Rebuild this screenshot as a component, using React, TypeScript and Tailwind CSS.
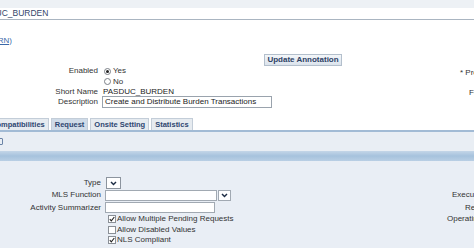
import React from 'react';

const Radio = ({ checked }: { checked?: boolean }) => (
    <span className="w-[7px] h-[7px] rounded-full border border-[#7a7f86] bg-white flex items-center justify-center shrink-0">
        {checked && <span className="w-[3px] h-[3px] rounded-full bg-[#222]" />}
    </span>
);

const Check = ({ checked }: { checked?: boolean }) => (
    <span className="w-[8px] h-[8px] border border-[#8a8f96] bg-white flex items-center justify-center shrink-0">
        {checked && (
            <svg width="6" height="6" viewBox="0 0 6 6">
                <path d="M0.8 3.2 L2.3 4.8 L5.3 1" fill="none" stroke="#222" strokeWidth="1.1" />
            </svg>
        )}
    </span>
);

const Chevron = () => (
    <svg width="7" height="5" viewBox="0 0 7 5">
        <path d="M1 1 L3.5 3.6 L6 1" fill="none" stroke="#1d2c44" strokeWidth="1.4" />
    </svg>
);

const TABS = ['Compatibilities', 'Request', 'Onsite Setting', 'Statistics'];

export default function App() {
    return (
        <div className="w-[474px] h-[248px] overflow-hidden bg-white text-[8px] leading-none text-[#333] font-['Liberation_Sans',Arial,sans-serif] flex flex-col">
            {/* page header */}
            <div className="h-[8px] bg-[#edf1f5] shrink-0" />
            <div className="h-[12px] border-b border-[#aab5c1] flex items-center whitespace-nowrap shrink-0">
                <span className="-ml-[27px] text-[8.5px] text-[#34466a]">PASDUC_BURDEN</span>
            </div>
            <div className="mt-[16px] h-[9px] w-[12px] overflow-hidden flex justify-end items-center whitespace-nowrap shrink-0">
                <span className="underline text-[#3b69a8]">(PASDUC_BURN)</span>
            </div>

            {/* main form */}
            <div className="mt-[8px] flex flex-col shrink-0">
                <div className="h-[13px] flex items-center">
                    <button className="ml-[264px] w-[78px] h-[12px] border border-[#b3bfcc] bg-gradient-to-b from-[#f3f6f9] to-[#dbe3ec] text-[8px] font-bold text-[#2d4165]">
                        Update Annotation
                    </button>
                </div>
                <div className="h-[10px] flex items-center whitespace-nowrap">
                    <span className="w-[98px] text-right">Enabled</span>
                    <span className="ml-[6px] flex items-center gap-[2px]"><Radio checked />Yes</span>
                    <span className="ml-auto w-[14px] mt-[4px]">* Program</span>
                </div>
                <div className="h-[11px] flex items-center whitespace-nowrap">
                    <span className="w-[98px]" />
                    <span className="ml-[6px] flex items-center gap-[2px]"><Radio />No</span>
                </div>
                <div className="h-[9px] flex items-center whitespace-nowrap">
                    <span className="w-[98px] text-right">Short Name</span>
                    <span className="ml-[5px] text-[#222]">PASDUC_BURDEN</span>
                    <span className="ml-auto w-[5px] mt-[2px]">Format</span>
                </div>
                <div className="h-[12px] flex items-center whitespace-nowrap">
                    <span className="w-[98px] text-right">Description</span>
                    <span className="ml-[4px] w-[170px] h-[12px] border border-[#9aa3ad] bg-white flex items-center pl-[2px] text-[#222]">
                        Create and Distribute Burden Transactions
                    </span>
                </div>
            </div>

            {/* tabs */}
            <div className="mt-[10px] h-[12px] flex items-end gap-[2px] whitespace-nowrap shrink-0">
                {TABS.map((t, i) => (
                    <div
                        key={t}
                        className={`h-[12px] px-[3px] flex items-center text-[7.5px] font-bold text-[#2d4670] border border-b-0 border-[#c3cdd8] ${i === 0 ? '-ml-[13px]' : ''} ${t === 'Request' ? 'bg-[#cfdbe8]' : 'bg-[#e6ebf0]'}`}
                    >
                        {t}
                    </div>
                ))}
            </div>
            <div className="h-[2px] bg-[#a2bbd5] shrink-0" />
            <div className="h-[19px] bg-[#e9eef4] flex items-center shrink-0">
                <span className="-ml-[4px] w-[7px] h-[7px] border border-[#6b84a6] rounded-[1px]" />
            </div>
            <div className="h-[10px] bg-gradient-to-b from-[#c4d6e8] via-[#a6c2dd] to-[#b9cfe4] shrink-0" />

            {/* request region */}
            <div className="flex-1 bg-[#e9eef5] pt-[16px] flex flex-col">
                <div className="h-[12px] flex items-center whitespace-nowrap">
                    <span className="w-[101px] text-right">Type</span>
                    <span className="ml-[5px] w-[15px] h-[12px] border border-[#8c949e] bg-white flex items-center justify-center">
                        <Chevron />
                    </span>
                </div>
                <div className="h-[12px] flex items-center whitespace-nowrap">
                    <span className="w-[101px] text-right">MLS Function</span>
                    <span className="ml-[4px] w-[112px] h-[11px] border border-[#a1a9b2] bg-white" />
                    <span className="ml-[1px] w-[13px] h-[11px] border border-[#a1a9b2] bg-white flex items-center justify-center">
                        <Chevron />
                    </span>
                    <span className="ml-auto w-[22px]">Executable</span>
                </div>
                <div className="h-[13px] flex items-center whitespace-nowrap">
                    <span className="w-[101px] text-right">Activity Summarizer</span>
                    <span className="ml-[4px] w-[110px] h-[11px] border border-[#a1a9b2] bg-white" />
                    <span className="ml-auto w-[9px]">Request Type</span>
                </div>
                {[
                    ['Allow Multiple Pending Requests', true, 'Operating Unit'],
                    ['Allow Disabled Values', false, ''],
                    ['NLS Compliant', true, ''],
                ].map(([label, on, right]) => (
                    <div key={label as string} className="h-[10.5px] flex items-center whitespace-nowrap">
                        <span className="ml-[108px] flex items-center gap-[1px]">
                            <Check checked={on as boolean} />
                            {label as string}
                        </span>
                        {right ? <span className="ml-auto w-[27px]">{right as string}</span> : null}
                    </div>
                ))}
            </div>
        </div>
    );
}
